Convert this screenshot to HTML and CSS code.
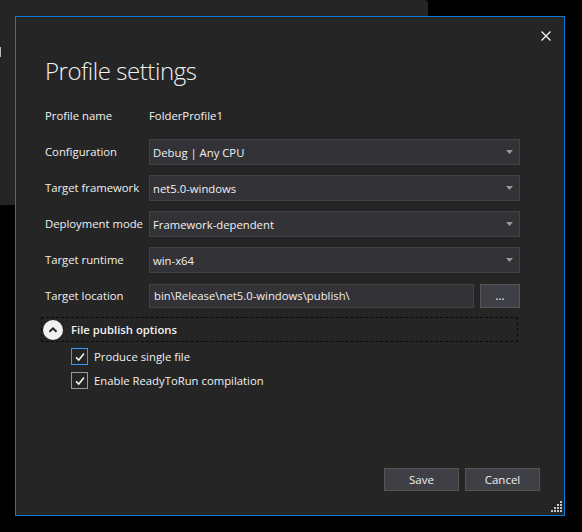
FILE: index.html
```html
<!DOCTYPE html>
<html>
<head>
<meta charset="utf-8">
<link rel="stylesheet" href="styles.css">
</head>
<body>
<div class="desktop">
  <div class="back-window"><span class="back-mark"></span></div>
  <div class="dialog">
    <div class="dialog-head">
      <button class="close" aria-label="Close">
        <svg width="10" height="10" viewBox="0 0 10 10"><path d="M0.5 0.5 L9.5 9.5 M9.5 0.5 L0.5 9.5" stroke="#f1f1f1" stroke-width="1.4" fill="none"/></svg>
      </button>
    </div>
    <h1 class="title">Profile settings</h1>
    <div class="form">
      <div class="label">Profile name</div>
      <div class="value">FolderProfile1</div>

      <div class="label">Configuration</div>
      <div class="select"><span>Debug | Any CPU</span><svg class="arrow" width="7" height="4" viewBox="0 0 7 4"><path d="M0 0 H7 L3.5 4 Z" fill="#999"/></svg></div>

      <div class="label">Target framework</div>
      <div class="select"><span>net5.0-windows</span><svg class="arrow" width="7" height="4" viewBox="0 0 7 4"><path d="M0 0 H7 L3.5 4 Z" fill="#999"/></svg></div>

      <div class="label">Deployment mode</div>
      <div class="select"><span>Framework-dependent</span><svg class="arrow" width="7" height="4" viewBox="0 0 7 4"><path d="M0 0 H7 L3.5 4 Z" fill="#999"/></svg></div>

      <div class="label">Target runtime</div>
      <div class="select"><span>win-x64</span><svg class="arrow" width="7" height="4" viewBox="0 0 7 4"><path d="M0 0 H7 L3.5 4 Z" fill="#999"/></svg></div>

      <div class="label">Target location</div>
      <div class="location">
        <div class="input">bin\Release\net5.0-windows\publish\</div>
        <button class="browse">...</button>
      </div>
    </div>

    <div class="expander">
      <span class="exp-icon">
        <svg width="20" height="20" viewBox="0 0 20 20"><circle cx="10" cy="10" r="10" fill="#f1f1f1"/><path d="M6.5 11.8 L10 8.3 L13.5 11.8" stroke="#252526" stroke-width="2" fill="none"/></svg>
      </span>
      <span class="exp-text">File publish options</span>
    </div>

    <div class="options">
      <label class="check"><span class="box focus"><svg width="12" height="12" viewBox="0 0 12 12"><path d="M2 6.3 L4.8 9 L10 2.5" stroke="#f1f1f1" stroke-width="1.6" fill="none"/></svg></span>Produce single file</label>
      <label class="check"><span class="box"><svg width="12" height="12" viewBox="0 0 12 12"><path d="M2 6.3 L4.8 9 L10 2.5" stroke="#f1f1f1" stroke-width="1.6" fill="none"/></svg></span>Enable ReadyToRun compilation</label>
    </div>

    <div class="footer">
      <button class="btn">Save</button>
      <button class="btn">Cancel</button>
    </div>
    <svg class="grip" width="12" height="12" viewBox="0 0 12 12">
      <g fill="#c8c8c8">
        <rect x="10" y="0" width="2" height="2"/>
        <rect x="7" y="3" width="2" height="2"/><rect x="10" y="3" width="2" height="2"/>
        <rect x="4" y="6" width="2" height="2"/><rect x="7" y="6" width="2" height="2"/><rect x="10" y="6" width="2" height="2"/>
        <rect x="1" y="9" width="2" height="2"/><rect x="4" y="9" width="2" height="2"/><rect x="7" y="9" width="2" height="2"/><rect x="10" y="9" width="2" height="2"/>
      </g>
    </svg>
  </div>
</div>
</body>
</html>
```

FILE: styles.css
```css
* { box-sizing: border-box; }
html, body { margin: 0; padding: 0; }
body {
  background: #000;
  width: 582px;
  height: 532px;
  overflow: hidden;
  font-family: "Open Sans", "Noto Sans", sans-serif;
  font-size: 11.3px;
  color: #f1f1f1;
}
.desktop { position: relative; width: 582px; height: 532px; }
.back-window {
  position: absolute;
  left: 0; top: 0;
  width: 428px; height: 205px;
  background: #252526;
  border-radius: 0 4px 0 0;
}
.back-mark {
  position: absolute;
  left: 0; top: 47px;
  width: 1px; height: 10px;
  background: #bbb;
}
.dialog {
  position: absolute;
  left: 15px; top: 16px;
  width: 550px; height: 500px;
  background: #252526;
  border: 1px solid #0e7ad3;
  display: flex;
  flex-direction: column;
  padding: 0 24px 24px 29px;
}
.dialog-head {
  display: flex;
  justify-content: flex-end;
  height: 37px;
  padding-top: 14px;
  margin-right: -11px;
}
.close {
  background: none;
  border: 0;
  padding: 0;
  width: 10px;
  height: 10px;
  display: block;
}
.close svg { display: block; }
.title {
  margin: 0 0 15px 0;
  font-weight: 300;
  font-size: 24px;
  letter-spacing: -0.45px;
  line-height: 34px;
  height: 34px;
  color: #f1f1f1;
}
.form {
  display: grid;
  grid-template-columns: 104px 371px;
  grid-auto-rows: 26px;
  row-gap: 10px;
  align-items: center;
}
.label, .value { line-height: 26px; white-space: nowrap; }
.select {
  height: 26px;
  background: #333337;
  border: 1px solid #434346;
  display: flex;
  align-items: center;
  justify-content: space-between;
  padding: 0 3px 0 3px;
}
.select .arrow { margin-right: 3px; display: block; }
.location {
  display: flex;
  gap: 6px;
  height: 24px;
}
.input {
  flex: 1;
  background: #333337;
  border: 1px solid #434346;
  line-height: 22px;
  padding: 0 4px;
}
.browse {
  width: 40px;
  background: #3f3f46;
  border: 1px solid #555;
  color: #f1f1f1;
  font-family: inherit;
  font-size: 12px;
  padding: 0;
  line-height: 18px;
}
.expander {
  margin: 8px 0 0 -4px;
  width: 477px;
  height: 25px;
  border: 1px dashed #0a0a0a;
  display: flex;
  align-items: center;
  gap: 8px;
  padding-left: 1px;
}
.exp-icon svg { display: block; }
.exp-text { font-weight: 600; }
.options {
  display: flex;
  flex-direction: column;
  gap: 7px;
  margin: 6px 0 0 26px;
}
.check {
  display: flex;
  align-items: center;
  gap: 6px;
  height: 17px;
}
.box {
  width: 17px; height: 17px;
  border: 1px solid #999;
  display: flex;
  align-items: center;
  justify-content: center;
}
.box.focus { border-color: #3399ff; }
.box svg { display: block; }
.footer {
  margin-top: auto;
  display: flex;
  justify-content: flex-end;
  gap: 6px;
}
.btn {
  width: 75px;
  height: 23px;
  background: #3f3f46;
  border: 1px solid #555;
  color: #f1f1f1;
  font-family: inherit;
  font-size: 11.5px;
  padding: 0;
}
.grip {
  position: absolute;
  right: 2px;
  bottom: 2px;
}
```
